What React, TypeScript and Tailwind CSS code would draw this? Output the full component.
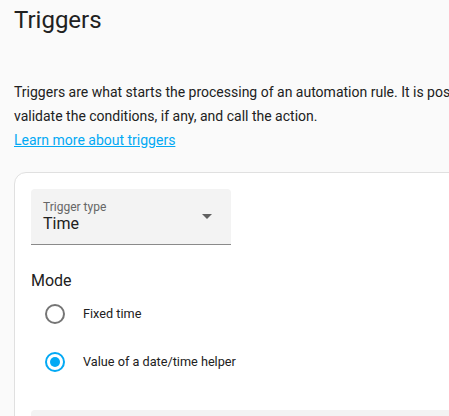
import React from "react";

export default function App() {
  return (
    <div className="w-[449px] h-[416px] overflow-hidden bg-[#fafafa] text-[#212121]" style={{ fontFamily: "Roboto, 'Noto Sans', sans-serif" }}>
      <div className="w-[900px] pl-[14px]">
        <div className="pt-[4px] text-[24px] leading-8 text-[#212121]">Triggers</div>
        <div className="mt-[44px] text-[14px] leading-6 text-[#212121]">
          <div className="whitespace-nowrap">
            Triggers are what starts the processing of an automation rule. It is possible to specify multiple triggers for the same rule. Once a trigger starts,
          </div>
          <div>validate the conditions, if any, and call the action.</div>
          <a href="#" className="text-[#03a9f4] underline">Learn more about triggers</a>
        </div>
        <div className="mt-[20px] rounded-[12px] border border-[#e0e0e0] bg-white p-[16px] h-[300px]">
          <div className="relative w-[200px] h-[56px] rounded-t-[4px] bg-[#f3f3f3] border-b border-[#8a8a8a] pl-[12px]">
            <div className="pt-[11px] text-[12px] leading-[14px] text-[#666]">Trigger type</div>
            <div className="text-[16px] leading-[20px] text-[#212121]">Time</div>
            <svg className="absolute right-[19px] top-[25px]" width="10" height="5" viewBox="0 0 10 5">
              <path d="M0 0 L10 0 L5 5 Z" fill="#616161" />
            </svg>
          </div>
          <div className="mt-[27px] text-[16px] leading-[18px]">Mode</div>
          <div className="flex items-center h-[48px]">
            <div className="w-[48px] flex justify-center">
              <div className="w-[20px] h-[20px] rounded-full border-2 border-[#757575]" />
            </div>
            <span className="ml-[4px] text-[12.7px]">Fixed time</span>
          </div>
          <div className="flex items-center h-[48px]">
            <div className="w-[48px] flex justify-center">
              <div className="w-[20px] h-[20px] rounded-full border-2 border-[#03a9f4] flex items-center justify-center">
                <div className="w-[10px] h-[10px] rounded-full bg-[#03a9f4]" />
              </div>
            </div>
            <span className="ml-[4px] text-[12.7px]">Value of a date/time helper</span>
          </div>
          <div className="mt-[24px] h-[56px] rounded-t-[4px] bg-[#f3f3f3]" />
        </div>
      </div>
    </div>
  );
}
